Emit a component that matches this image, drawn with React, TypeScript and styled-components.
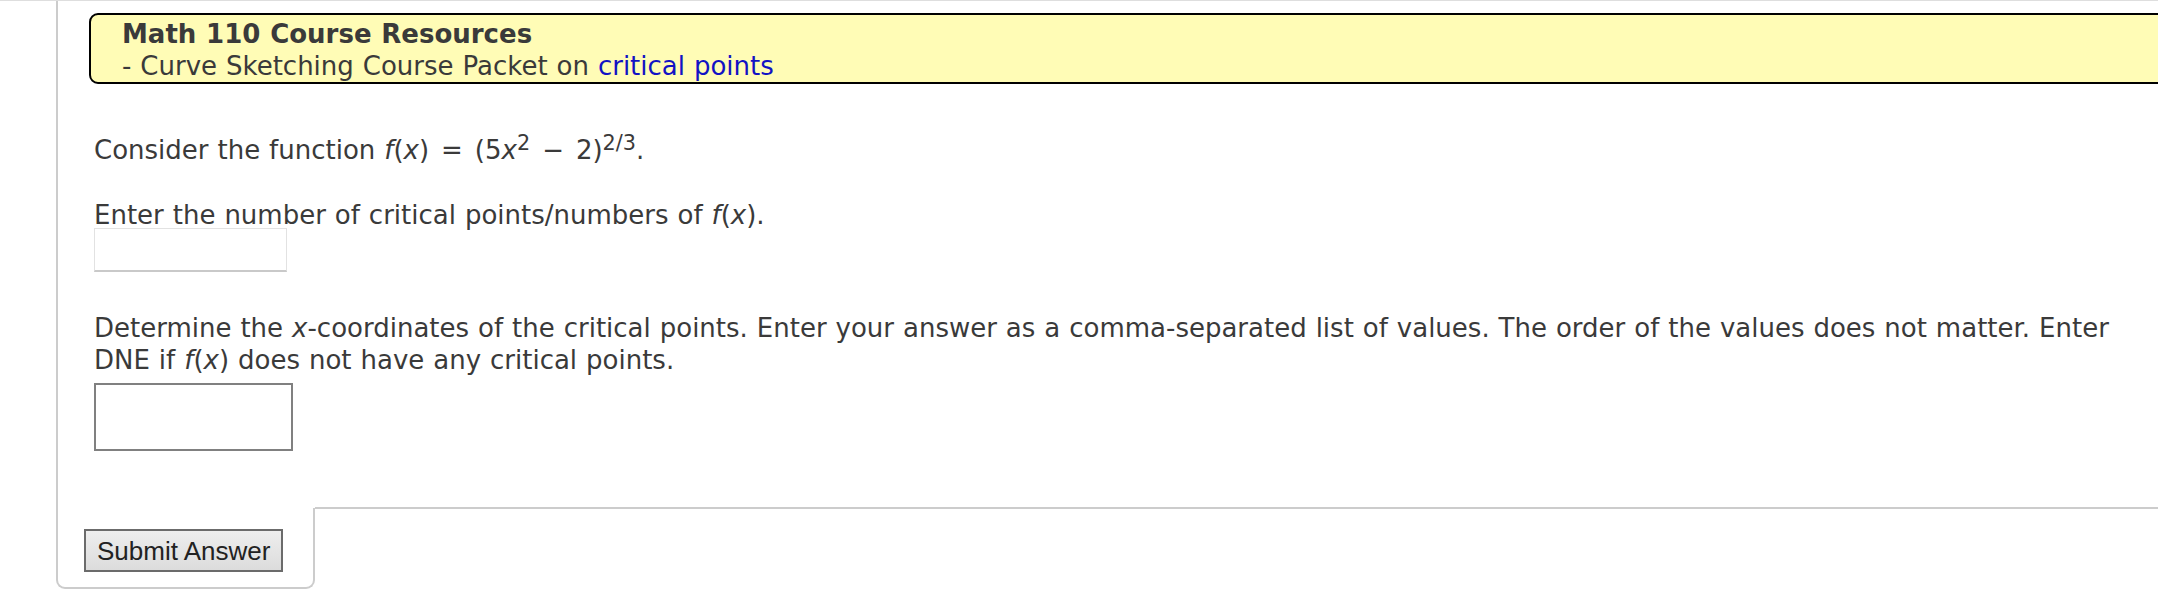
import React from 'react';
import styled, { createGlobalStyle } from 'styled-components';

const GlobalStyle = createGlobalStyle`
  html, body {
    margin: 0;
    padding: 0;
    background: #fff;
    overflow: hidden;
  }
`;

const Page = styled.div`
  border-top: 1px solid #dedede;
  width: 2300px;
  font-family: "DejaVu Sans", Verdana, sans-serif;
  font-size: 26px;
  line-height: 32px;
  word-spacing: 0.7px;
  color: #3a3a3a;
`;

const Panel = styled.div`
  margin-left: 56px;
`;

const Body = styled.div`
  border-left: 2px solid #cccccc;
  padding: 12px 0 57px 36px;
`;

const Resources = styled.div`
  margin-left: -5px;
  width: 2150px;
  padding: 3px 0 0 31px;
  background: #fffcb6;
  border: 2px solid #000;
  border-radius: 9px;
  box-sizing: border-box;
`;

const ResTitle = styled.div`
  font-weight: bold;
`;

const Link = styled.a`
  color: #1212c4;
  text-decoration: none;
`;

const Para = styled.p<{ $top: number }>`
  margin: ${(p) => p.$top}px 0 0;
  width: 2040px;
`;

const I = styled.i`
  font-style: italic;
`;

const Sup = styled.sup`
  font-size: 0.8em;
  line-height: 0;
  vertical-align: 0.45em;
`;

const Op = styled.span`
  padding: 0 3px;
`;

const Answer = styled.div<{ $w: number; $h: number; $top: number; $strong?: boolean }>`
  width: ${(p) => p.$w}px;
  height: ${(p) => p.$h}px;
  margin-top: ${(p) => p.$top}px;
  box-sizing: border-box;
  background: #fff;
  border: ${(p) => (p.$strong ? '2px solid #808080' : '1px solid #e2e2e2')};
  ${(p) => (p.$strong ? '' : 'border-bottom: 2px solid #c9c9c9;')}
`;

const Footer = styled.div`
  display: flex;
  align-items: flex-start;
`;

const Tab = styled.div`
  width: 259px;
  box-sizing: border-box;
  border: 2px solid #cccccc;
  border-top: none;
  border-radius: 0 0 9px 9px;
  padding: 21px 0 15px 26px;
`;

const Filler = styled.div`
  flex: 1;
  border-top: 2px solid #cccccc;
  margin-top: -1px;
`;

const SubmitButton = styled.button`
  font-family: "Liberation Sans", Arial, sans-serif;
  font-size: 26px;
  line-height: 30px;
  word-spacing: 0;
  color: #222;
  padding: 4.5px 11px;
  border: 2px solid #6b6b6b;
  background: linear-gradient(#eeeeee, #dcdcdc);
  border-radius: 0;
  cursor: pointer;
`;

export default function App() {
  return (
    <>
      <GlobalStyle />
      <Page>
        <Panel>
          <Body>
            <Resources>
              <ResTitle>Math 110 Course Resources</ResTitle>
              <div>
                - Curve Sketching Course Packet on <Link href="#">critical points</Link>
              </div>
            </Resources>
            <Para $top={50}>
              Consider the function <I>f</I>(<I>x</I>) <Op>=</Op> (5<I>x</I>
              <Sup>2</Sup> <Op>−</Op> 2)<Sup>2/3</Sup>.
            </Para>
            <Para $top={33}>
              Enter the number of critical points/numbers of <I>f</I>(<I>x</I>).
            </Para>
            <Answer $w={193} $h={44} $top={-3} />
            <Para $top={40}>
              Determine the <I>x</I>-coordinates of the critical points. Enter your answer as a
              comma-separated list of values. The order of the values does not matter. Enter DNE
              if <I>f</I>(<I>x</I>) does not have any critical points.
            </Para>
            <Answer $w={199} $h={68} $top={7} $strong />
          </Body>
          <Footer>
            <Tab>
              <SubmitButton>Submit Answer</SubmitButton>
            </Tab>
            <Filler />
          </Footer>
        </Panel>
      </Page>
    </>
  );
}
